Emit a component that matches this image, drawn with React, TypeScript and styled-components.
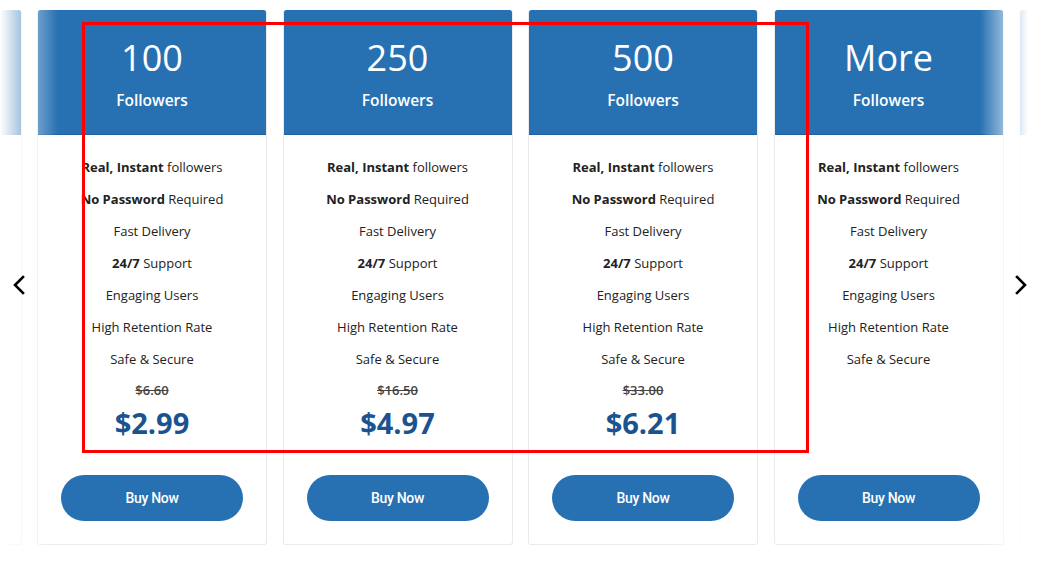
import React from "react";
import styled, { createGlobalStyle } from "styled-components";

const Global = createGlobalStyle`
  html, body { margin: 0; padding: 0; background: #fff; }
  body { font-family: "Open Sans", "Liberation Sans", sans-serif; }
  * { box-sizing: border-box; }
`;

const Slider = styled.div`
  position: relative;
  width: 1060px;
  height: 570px;
  overflow: hidden;
  background: #fff;
`;

const Track = styled.div`
  display: flex;
  gap: 15.5px;
  margin-left: -208.5px;
  padding-top: 10px;
`;

const Card = styled.div`
  flex: 0 0 230px;
  height: 535px;
  background: #fff;
  border: 1px solid #e8ebee;
  border-top: none;
  border-radius: 3px;
  display: flex;
  flex-direction: column;
  align-items: center;
  overflow: hidden;
`;

const Header = styled.div`
  width: calc(100% + 2px);
  margin: 0 -1px;
  height: 125px;
  flex: 0 0 125px;
  background: #2771b3;
  border-bottom: 1px solid #1f609c;
  border-radius: 3px 3px 0 0;
  display: flex;
  flex-direction: column;
  align-items: center;
  padding-top: 26px;
  color: #fff;
`;

const Amount = styled.div`
  font-size: 36px;
  line-height: 44px;
  font-weight: 400;
`;

const Unit = styled.div`
  margin-top: 8px;
  font-size: 15.5px;
  line-height: 24px;
  font-weight: 600;
`;

const Features = styled.ul`
  list-style: none;
  margin: 0;
  padding: 16px 0 0;
  display: flex;
  flex-direction: column;
  align-items: center;
`;

const Feature = styled.li`
  font-size: 13px;
  line-height: 32px;
  color: #222;
  b { font-weight: 700; }
`;

const OldPrice = styled.div`
  margin-top: 6px;
  font-size: 13px;
  line-height: 18px;
  font-weight: 600;
  color: #444;
  text-decoration: line-through;
`;

const Price = styled.div`
  margin-top: 6px;
  font-size: 29px;
  line-height: 36px;
  font-weight: 700;
  color: #1b5390;
`;

const BuyButton = styled.button`
  margin-top: auto;
  margin-bottom: 23px;
  width: 182px;
  height: 46px;
  flex: 0 0 46px;
  border: none;
  border-radius: 23px;
  background: #2771b3;
  color: #fff;
  font-family: Roboto, "Liberation Sans", sans-serif;
  font-size: 14px;
  font-weight: 500;
  letter-spacing: -0.3px;
  cursor: pointer;
`;

const Fade = styled.div<{ $side: "left" | "right" }>`
  position: absolute;
  top: 0;
  bottom: 0;
  pointer-events: none;
  ${(p) =>
    p.$side === "left"
      ? `left: 0; width: 58px; background: linear-gradient(to right, #fff 0%, rgba(255,255,255,0.6) 35%, rgba(255,255,255,0) 100%);`
      : `right: 0; width: 80px; background: linear-gradient(to left, #fff 0px, #fff 32px, rgba(255,255,255,0.5) 57px, rgba(255,255,255,0) 80px);`}
`;

const Arrow = styled.button<{ $side: "left" | "right" }>`
  position: absolute;
  top: 273px;
  ${(p) => (p.$side === "left" ? "left: 10px;" : "left: 1012px;")}
  width: 18px;
  height: 24px;
  padding: 0;
  border: none;
  background: transparent;
  display: flex;
  align-items: center;
  justify-content: center;
`;

const Highlight = styled.div`
  position: absolute;
  left: 82px;
  top: 22px;
  width: 727px;
  height: 431px;
  border: 3px solid #f00;
  pointer-events: none;
`;

type Plan = { amount: string; old?: string; price?: string; peek?: boolean };

const plans: Plan[] = [
  { amount: "", peek: true },
  { amount: "100", old: "$6.60", price: "$2.99" },
  { amount: "250", old: "$16.50", price: "$4.97" },
  { amount: "500", old: "$33.00", price: "$6.21" },
  { amount: "More" },
  { amount: "", peek: true },
];

const PlanCard = ({ plan }: { plan: Plan }) =>
  plan.peek ? (
    <Card aria-hidden>
      <Header />
    </Card>
  ) : (
    <Card>
      <Header>
        <Amount>{plan.amount}</Amount>
        <Unit>Followers</Unit>
      </Header>
      <Features>
        <Feature>
          <b>Real, Instant</b> followers
        </Feature>
        <Feature>
          <b>No Password</b> Required
        </Feature>
        <Feature>Fast Delivery</Feature>
        <Feature>
          <b>24/7</b> Support
        </Feature>
        <Feature>Engaging Users</Feature>
        <Feature>High Retention Rate</Feature>
        <Feature>Safe &amp; Secure</Feature>
      </Features>
      {plan.old && <OldPrice>{plan.old}</OldPrice>}
      {plan.price && <Price>{plan.price}</Price>}
      <BuyButton>Buy Now</BuyButton>
    </Card>
  );

const Chevron = ({ dir }: { dir: "left" | "right" }) => (
  <svg width="12" height="20" viewBox="0 0 12 20">
    <polyline
      points={dir === "left" ? "10,2 2,10 10,18" : "2,2 10,10 2,18"}
      fill="none"
      stroke="#000"
      strokeWidth="2.6"
      strokeLinecap="square"
    />
  </svg>
);

export default function App() {
  return (
    <>
      <Global />
      <Slider>
        <Track>
          {plans.map((p, i) => (
            <PlanCard key={i} plan={p} />
          ))}
        </Track>
        <Fade $side="left" />
        <Fade $side="right" />
        <Arrow $side="left">
          <Chevron dir="left" />
        </Arrow>
        <Arrow $side="right">
          <Chevron dir="right" />
        </Arrow>
        <Highlight />
      </Slider>
    </>
  );
}
